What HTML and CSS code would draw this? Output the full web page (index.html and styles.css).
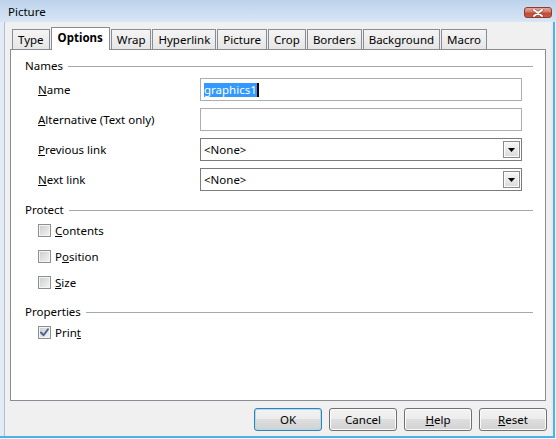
FILE: index.html
```html
<!DOCTYPE html>
<html lang="en">
<head>
<meta charset="utf-8">
<title>Picture</title>
<link rel="stylesheet" href="styles.css">
</head>
<body>
<div class="window">
  <div class="titlebar">
    <span class="title">Picture</span>
    <div class="close" aria-label="Close">
      <svg width="12" height="8" viewBox="0 0 12 8">
        <path d="M2 1 L10 7 M10 1 L2 7" stroke="#5a1d16" stroke-width="3.2" stroke-linecap="round" opacity="0.45"/>
        <path d="M2 1 L10 7 M10 1 L2 7" stroke="#ffffff" stroke-width="2" stroke-linecap="round"/>
      </svg>
    </div>
  </div>
  <div class="client">
    <div class="tabs">
      <div class="tab">Type</div>
      <div class="tab active">Options</div>
      <div class="tab">Wrap</div>
      <div class="tab">Hyperlink</div>
      <div class="tab">Picture</div>
      <div class="tab">Crop</div>
      <div class="tab">Borders</div>
      <div class="tab">Background</div>
      <div class="tab">Macro</div>
    </div>
    <div class="panel">
      <section class="group">
        <div class="group-title">Names</div>
        <div class="fields">
          <label class="field-label"><span class="mn">N</span>ame</label>
          <div class="input"><span class="sel">graphics1</span></div>
          <label class="field-label"><span class="mn">A</span>lternative (Text only)</label>
          <div class="input"></div>
          <label class="field-label"><span class="mn">P</span>revious link</label>
          <div class="input dropdown"><span>&lt;None&gt;</span>
            <span class="dd-btn"><svg width="7" height="4" viewBox="0 0 7 4"><polygon points="0,0 7,0 3.5,4" fill="#000"/></svg></span>
          </div>
          <label class="field-label"><span class="mn">N</span>ext link</label>
          <div class="input dropdown"><span>&lt;None&gt;</span>
            <span class="dd-btn"><svg width="7" height="4" viewBox="0 0 7 4"><polygon points="0,0 7,0 3.5,4" fill="#000"/></svg></span>
          </div>
        </div>
      </section>
      <section class="group protect">
        <div class="group-title">Protect</div>
        <div class="checks">
          <div class="check"><span class="box"></span><span><span class="mn">C</span>ontents</span></div>
          <div class="check"><span class="box"></span><span>P<span class="mn">o</span>sition</span></div>
          <div class="check"><span class="box"></span><span><span class="mn">S</span>ize</span></div>
        </div>
      </section>
      <section class="group properties">
        <div class="group-title">Properties</div>
        <div class="checks">
          <div class="check"><span class="box checked"><svg width="11" height="11" viewBox="0 0 11 11"><path d="M2 5.5 L4.5 8.2 L9 2.2" fill="none" stroke="#4b5e92" stroke-width="1.9" stroke-linecap="round" stroke-linejoin="round"/></svg></span><span>Prin<span class="mn">t</span></span></div>
        </div>
      </section>
    </div>
    <div class="buttons">
      <button class="btn default">OK</button>
      <button class="btn">Cancel</button>
      <button class="btn"><span class="mn">H</span>elp</button>
      <button class="btn"><span class="mn">R</span>eset</button>
    </div>
  </div>
</div>
</body>
</html>
```
FILE: styles.css
```css
* {
  box-sizing: border-box;
}

html,
body {
  margin: 0;
  padding: 0;
}

body {
  font-family: "Noto Sans", "DejaVu Sans", sans-serif;
  font-size: 11.5px;
  color: #000;
  background: #ffffff;
}

.window {
  width: 556px;
  height: 439px;
  display: flex;
  flex-direction: column;
  background: #e3ecf6;
  box-shadow: inset -1px -1px 0 #eef4fa, inset -3px -3px 0 #4cb4e5;
}

.titlebar {
  height: 22px;
  flex: none;
  display: flex;
  justify-content: space-between;
  align-items: flex-start;
  background: linear-gradient(#bcd2eb, #d8e6f5);
}

.title {
  padding-left: 8px;
  margin-top: 1px;
  line-height: 22px;
}

.close {
  width: 28px;
  height: 11px;
  margin: 7px 4px 0 0;
  border: 1px solid #8d3c30;
  border-radius: 3px;
  background: linear-gradient(#e4a99b 0%, #d27a68 45%, #c24a37 55%, #c85a44 100%);
  display: flex;
  align-items: center;
  justify-content: center;
}

.client {
  flex: 1;
  margin: 0 5px 3px 4px;
  border-left: 1px solid #b3bfcc;
  background: #f0f0f0;
  padding: 5px 4px 5px 5px;
  display: flex;
  flex-direction: column;
}

.tabs {
  height: 22px;
  flex: none;
  display: flex;
  align-items: flex-end;
  gap: 1px;
  padding-left: 2px;
}

.tab {
  height: 20px;
  line-height: 19px;
  padding: 0 5px;
  border: 1px solid #898c95;
  border-bottom: none;
  background: linear-gradient(#f4f4f4, #e6e6e6);
  white-space: nowrap;
}

.tab.active {
  position: relative;
  z-index: 1;
  height: 23px;
  margin-bottom: -1px;
  line-height: 20px;
  padding: 0 6px;
  background: #ffffff;
  font-weight: bold;
}

.panel {
  height: 352px;
  flex: none;
  margin-right: 1px;
  border: 1px solid #898c95;
  background: #ffffff;
  padding: 9px 12px 0 14px;
}

.group-title {
  height: 14px;
  line-height: 14px;
  display: flex;
  align-items: center;
  gap: 5px;
}

.group-title::after {
  content: "";
  flex: 1;
  border-top: 1px solid #a8a8a8;
}

.fields {
  display: grid;
  grid-template-columns: 162px 1fr;
  grid-auto-rows: 23px;
  row-gap: 7px;
  margin-top: 5px;
  padding: 0 11px 0 13px;
}

.field-label {
  display: flex;
  align-items: center;
}

.mn {
  text-decoration: underline;
  text-underline-offset: 1px;
}

.input {
  display: flex;
  align-items: center;
  border: 1px solid #abadb3;
  background: #ffffff;
  padding: 0 3px;
}

.sel {
  display: inline-block;
  height: 14px;
  line-height: 13px;
  background: #3399ff;
  color: #ffffff;
  border-right: 2px solid #000;
}

.dropdown {
  justify-content: space-between;
  border-color: #7c7c7c;
  padding-right: 1px;
}

.dd-btn {
  width: 17px;
  height: 17px;
  border: 1px solid #8a8a8a;
  background: linear-gradient(#f7f7f7, #dadada);
  box-shadow: inset 0 0 0 1px #fbfbfb;
  display: flex;
  align-items: center;
  justify-content: center;
}

.protect {
  margin-top: 12px;
}

.properties {
  margin-top: 10px;
}

.checks {
  padding-left: 13px;
}

.check {
  height: 26px;
  display: flex;
  align-items: center;
  gap: 4px;
}

.box {
  width: 13px;
  height: 13px;
  border: 1px solid #8e8f8f;
  background: linear-gradient(135deg, #c9cbce, #f5f5f5);
  box-shadow: inset 0 0 0 1px #f4f4f4;
  display: flex;
  align-items: center;
  justify-content: center;
}

.buttons {
  height: 23px;
  flex: none;
  margin-top: 7px;
  display: flex;
  justify-content: flex-end;
  gap: 7px;
}

.btn {
  width: 68px;
  height: 23px;
  padding: 0;
  font: inherit;
  color: #000;
  border: 1px solid #707070;
  border-radius: 3px;
  background: linear-gradient(#f3f3f3 0%, #ececec 50%, #dedede 50%, #d2d2d2 100%);
  box-shadow: inset 0 0 0 1px #fbfbfb;
}

.btn.default {
  border-color: #3c7fb1;
  box-shadow: inset 0 0 0 1px #a9dcf6;
}
```
